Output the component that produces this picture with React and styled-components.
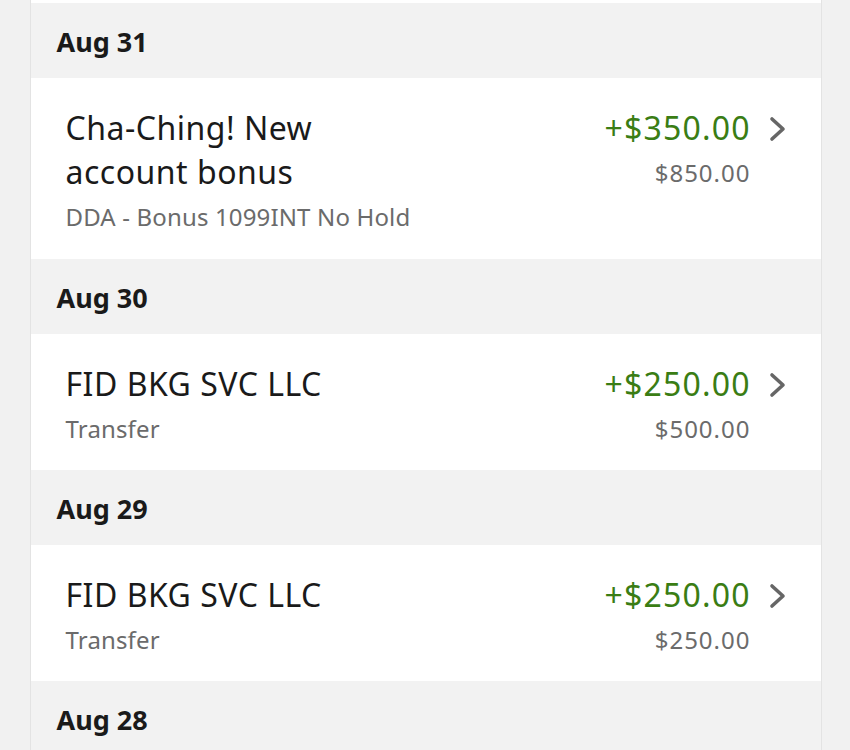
import React from "react";
import styled, { createGlobalStyle } from "styled-components";

const GlobalStyle = createGlobalStyle`
  html, body {
    margin: 0;
    padding: 0;
    background: #f1f1f1;
    font-family: "Noto Sans", "Open Sans", sans-serif;
  }
`;

const Page = styled.div`
  display: flex;
  justify-content: center;
  width: 850px;
  height: 750px;
  overflow: hidden;
  background: #f1f1f1;
`;

const Panel = styled.div`
  display: flex;
  flex-direction: column;
  width: 790px;
  margin-left: 1px;
  padding-top: 3px;
  background: #ffffff;
  border-left: 1px solid #e3e3e3;
  border-right: 1px solid #e3e3e3;
`;

const DayHeader = styled.div`
  display: flex;
  flex-shrink: 0;
  align-items: center;
  height: 75px;
  padding-left: 26px;
  padding-top: 1px;
  background: #f2f2f2;
  font-size: 27px;
  font-weight: 700;
  color: #1a1a1a;
  box-sizing: border-box;
`;

const Row = styled.div`
  display: flex;
  flex-shrink: 0;
  align-items: flex-start;
  justify-content: space-between;
  padding: 28px 32px ${(p) => p.$bottom}px 35px;
  background: #ffffff;
`;

const Info = styled.div`
  display: flex;
  flex-direction: column;
`;

const Title = styled.div`
  max-width: 300px;
  font-size: 32px;
  line-height: 44px;
  letter-spacing: 0.5px;
  color: #1a1a1a;
`;

const Sub = styled.div`
  font-size: 24px;
  line-height: 44px;
  letter-spacing: 0.15px;
  margin-top: 1px;
  margin-bottom: -1px;
  color: #6b6b6b;
`;

const Amounts = styled.div`
  display: flex;
  align-items: flex-start;
  gap: 17px;
`;

const AmountCol = styled.div`
  display: flex;
  flex-direction: column;
  align-items: flex-end;
`;

const Amount = styled.div`
  font-size: 32px;
  line-height: 44px;
  letter-spacing: 1.2px;
  margin-right: -1.2px;
  color: #3a7d14;
`;

const Balance = styled.div`
  font-size: 24px;
  line-height: 44px;
  letter-spacing: 1px;
  margin-right: -1px;
  margin-top: 1px;
  color: #6b6b6b;
`;

const Chevron = styled.svg`
  width: 22px;
  height: 26px;
  margin-top: 10px;
`;

const days = [
  {
    date: "Aug 31",
    title: "Cha-Ching! New account bonus",
    sub: "DDA - Bonus 1099INT No Hold",
    amount: "+$350.00",
    balance: "$850.00",
    bottom: 21,
  },
  {
    date: "Aug 30",
    title: "FID BKG SVC LLC",
    sub: "Transfer",
    amount: "+$250.00",
    balance: "$500.00",
    bottom: 19,
  },
  {
    date: "Aug 29",
    title: "FID BKG SVC LLC",
    sub: "Transfer",
    amount: "+$250.00",
    balance: "$250.00",
    bottom: 19,
  },
];

export default function App() {
  return (
    <Page>
      <GlobalStyle />
      <Panel>
        {days.map((d) => (
          <React.Fragment key={d.date}>
            <DayHeader>{d.date}</DayHeader>
            <Row $bottom={d.bottom}>
              <Info>
                <Title>{d.title}</Title>
                <Sub>{d.sub}</Sub>
              </Info>
              <Amounts>
                <AmountCol>
                  <Amount>{d.amount}</Amount>
                  <Balance>{d.balance}</Balance>
                </AmountCol>
                <Chevron viewBox="0 0 22 26">
                  <path
                    d="M5 3 L16 13 L5 23"
                    fill="none"
                    stroke="#666"
                    strokeWidth="3.6"
                    strokeLinecap="round"
                    strokeLinejoin="round"
                  />
                </Chevron>
              </Amounts>
            </Row>
          </React.Fragment>
        ))}
        <DayHeader>Aug 28</DayHeader>
      </Panel>
    </Page>
  );
}
